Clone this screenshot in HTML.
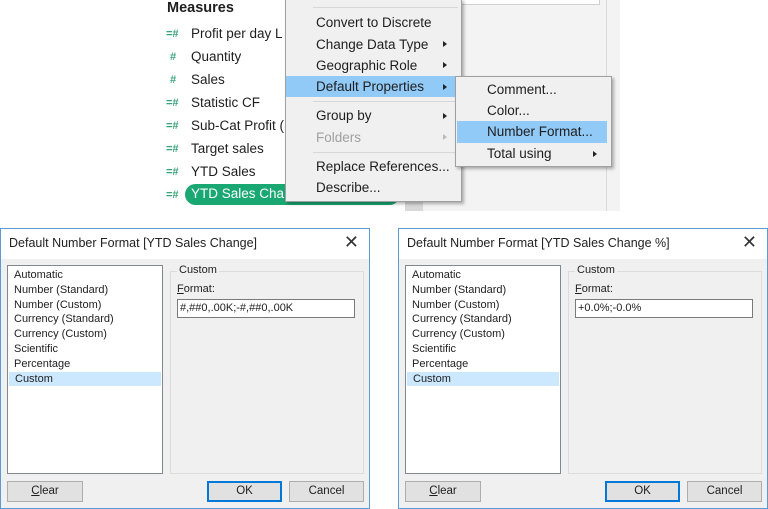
<!DOCTYPE html>
<html><head><style>
*{margin:0;padding:0;box-sizing:border-box}
body{width:768px;height:509px;background:#fff;position:relative;overflow:hidden;font-family:"Segoe UI","Liberation Sans",sans-serif;color:#1e1e1e}
.a{position:absolute;white-space:nowrap}
.m{font-size:13.5px}
.ic{color:#3aa57a;font-size:11px;font-weight:bold}
.ic2{color:#3aa57a;font-size:11px;font-weight:bold}
.arr{position:absolute;width:0;height:0;border-left:4px solid #222;border-top:3px solid transparent;border-bottom:3px solid transparent}
.dlg{position:absolute;top:228px;width:370px;height:281px;border:1px solid #5b9bd5;background:#f0f0f0;font-size:11px}
.dlg .tb{position:absolute;left:0;top:0;right:0;height:30px;background:#fff}
.dlg .tt{position:absolute;left:8px;top:7px;font-size:12.5px;color:#222}
.dlg .x{position:absolute;right:10px;top:3px;font-size:18px;color:#333;font-weight:300}
.lst{position:absolute;left:6px;top:36px;width:156px;height:209px;background:#fff;border:1px solid #828790}
.lst div{height:14.8px;line-height:14.8px;padding-left:6px;font-size:11px}
.lst .sel{background:#cce8ff;margin:0 1px}
.grp{position:absolute;left:169px;top:42px;width:194px;height:203px;border:1px solid #dcdcdc}
.btn{position:absolute;top:252px;height:21px;border:1px solid #adadad;background:#e1e1e1;text-align:center;line-height:19px;font-size:11.5px}
</style></head><body>
<div class="a" style="left:405px;top:0;width:215px;height:211px;background:#f3f3f3"></div>
<div class="a" style="left:405px;top:0;width:18px;height:211px;background:#d9d9d9"></div>
<div class="a" style="left:440px;top:0;width:160px;height:5px;background:#fff;border:1px solid #d0d0d0;border-top:none"></div>
<div class="a" style="left:606px;top:0;width:1px;height:211px;background:#dadada"></div>
<div class="a" style="left:167px;top:0px;font-size:14.5px;font-weight:bold">Measures</div>
<div class="a ic" style="left:166px;top:28px">=#</div><div class="a m" style="left:191px;top:26px">Profit per day L</div>
<div class="a ic" style="left:170px;top:51px">#</div><div class="a m" style="left:191px;top:49px">Quantity</div>
<div class="a ic" style="left:170px;top:74px">#</div><div class="a m" style="left:191px;top:72px">Sales</div>
<div class="a ic" style="left:166px;top:97px">=#</div><div class="a m" style="left:191px;top:95px">Statistic CF</div>
<div class="a ic" style="left:166px;top:120px">=#</div><div class="a m" style="left:191px;top:118px">Sub-Cat Profit (</div>
<div class="a ic" style="left:166px;top:143px">=#</div><div class="a m" style="left:191px;top:141px">Target sales</div>
<div class="a ic" style="left:166px;top:166px">=#</div><div class="a m" style="left:191px;top:164px">YTD Sales</div>
<div class="a ic" style="left:166px;top:189px">=#</div>
<div class="a" style="left:185px;top:184px;width:215px;height:21px;border-radius:11px;background:#1aa872"></div>
<div class="a m" style="left:191px;top:186px;color:#fff">YTD Sales Cha</div>
<div class="a" style="left:285px;top:-1px;width:177px;height:203px;background:#f0f0f0;border:1px solid #a0a0a0;box-shadow:2px 2px 3px rgba(0,0,0,.3)"></div>
<div class="a" style="left:313px;top:7px;width:145px;height:1px;background:#d7d7d7"></div>
<div class="a" style="left:286px;top:76px;width:170px;height:21px;background:#91c9f7"></div>
<div class="a" style="left:313px;top:101px;width:145px;height:1px;background:#d7d7d7"></div>
<div class="a" style="left:313px;top:152px;width:145px;height:1px;background:#d7d7d7"></div>
<div class="a m" style="left:316px;top:15px">Convert to Discrete</div>
<div class="a m" style="left:316px;top:37px">Change Data Type</div><div class="arr" style="left:443px;top:41px"></div>
<div class="a m" style="left:316px;top:58px">Geographic Role</div><div class="arr" style="left:443px;top:62px"></div>
<div class="a m" style="left:316px;top:79px">Default Properties</div><div class="arr" style="left:443px;top:84px"></div>
<div class="a m" style="left:316px;top:108px">Group by</div><div class="arr" style="left:443px;top:113px"></div>
<div class="a m" style="left:316px;top:130px;color:#a0a0a0">Folders</div><div class="arr" style="left:443px;top:134px;border-left-color:#bbb"></div>
<div class="a m" style="left:316px;top:159px">Replace References...</div>
<div class="a m" style="left:316px;top:180px">Describe...</div>
<div class="a" style="left:455px;top:76px;width:157px;height:91px;background:#f0f0f0;border:1px solid #a0a0a0;box-shadow:2px 2px 3px rgba(0,0,0,.3)"></div>
<div class="a" style="left:457px;top:121px;width:150px;height:22px;background:#91c9f7"></div>
<div class="a m" style="left:487px;top:82px">Comment...</div>
<div class="a m" style="left:487px;top:103px">Color...</div>
<div class="a m" style="left:487px;top:124px">Number Format...</div>
<div class="a m" style="left:487px;top:146px">Total using</div><div class="arr" style="left:593px;top:151px"></div>
<div class="dlg" style="left:0">
 <div class="tb"></div><div class="tt">Default Number Format [YTD Sales Change]</div><div class="x">✕</div>
 <div class="lst"><div style="margin-top:2px">Automatic</div><div>Number (Standard)</div><div>Number (Custom)</div><div>Currency (Standard)</div><div>Currency (Custom)</div><div>Scientific</div><div>Percentage</div><div class="sel">Custom</div></div>
 <div class="grp"></div>
 <div class="a" style="left:176px;top:35px;background:#f0f0f0;padding:0 2px;font-size:11px">Custom</div>
 <div class="a" style="left:176px;top:54px;font-size:11px"><u>F</u>ormat:</div>
 <div class="a" style="left:176px;top:70px;width:178px;height:19px;background:#fff;border:1px solid #7a7a7a;font-size:11px;line-height:17px;padding-left:2px">#,##0,.00K;-#,##0,.00K</div>
 <div class="btn" style="left:6px;width:76px"><u>C</u>lear</div>
 <div class="btn" style="left:206px;width:75px;border:1px solid #0078d7;box-shadow:inset 0 0 0 1px #0078d7">OK</div>
 <div class="btn" style="left:288px;width:75px">Cancel</div>
</div>
<div class="dlg" style="left:398px">
 <div class="tb"></div><div class="tt">Default Number Format [YTD Sales Change %]</div><div class="x">✕</div>
 <div class="lst"><div style="margin-top:2px">Automatic</div><div>Number (Standard)</div><div>Number (Custom)</div><div>Currency (Standard)</div><div>Currency (Custom)</div><div>Scientific</div><div>Percentage</div><div class="sel">Custom</div></div>
 <div class="grp"></div>
 <div class="a" style="left:176px;top:35px;background:#f0f0f0;padding:0 2px;font-size:11px">Custom</div>
 <div class="a" style="left:176px;top:54px;font-size:11px"><u>F</u>ormat:</div>
 <div class="a" style="left:176px;top:70px;width:178px;height:19px;background:#fff;border:1px solid #7a7a7a;font-size:11px;line-height:17px;padding-left:2px">+0.0%;-0.0%</div>
 <div class="btn" style="left:6px;width:76px"><u>C</u>lear</div>
 <div class="btn" style="left:206px;width:75px;border:1px solid #0078d7;box-shadow:inset 0 0 0 1px #0078d7">OK</div>
 <div class="btn" style="left:288px;width:75px">Cancel</div>
</div>
</body></html>
